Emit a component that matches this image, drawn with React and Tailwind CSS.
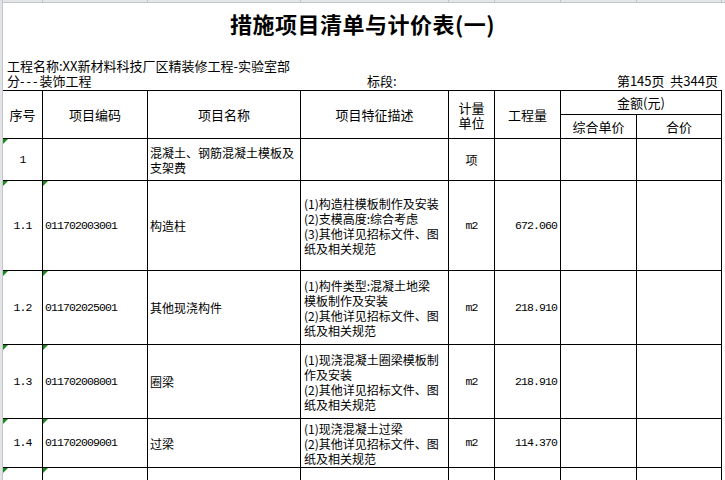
import React from "react";

const COLS = "grid-cols-[40px_105px_153px_148px_46px_66px_76px_85px]";
const CJK = "font-['Noto_Sans_CJK_SC',sans-serif]";
const MONO = "font-['Liberation_Mono','Noto_Sans_CJK_SC',monospace] text-[11.5px] tracking-[-0.9px]";

const DESC_TAIL = ["(2)其他详见招标文件、图", "纸及相关规范"];

const rows = [
  {
    no: "1",
    code: "",
    name: ["混凝土、钢筋混凝土模板及", "支架费"],
    desc: [],
    unit: "项",
    qty: "",
    h: "h-[42px]",
    markCode: false,
  },
  {
    no: "1.1",
    code: "011702003001",
    name: ["构造柱"],
    desc: ["(1)构造柱模板制作及安装", "(2)支模高度:综合考虑", "(3)其他详见招标文件、图", "纸及相关规范"],
    unit: "m2",
    qty: "672.060",
    h: "h-[90px]",
    markCode: true,
  },
  {
    no: "1.2",
    code: "011702025001",
    name: ["其他现浇构件"],
    desc: ["(1)构件类型:混凝土地梁", "模板制作及安装", ...DESC_TAIL],
    unit: "m2",
    qty: "218.910",
    h: "h-[74px]",
    markCode: true,
  },
  {
    no: "1.3",
    code: "011702008001",
    name: ["圈梁"],
    desc: ["(1)现浇混凝土圈梁模板制", "作及安装", ...DESC_TAIL],
    unit: "m2",
    qty: "218.910",
    h: "h-[74px]",
    markCode: true,
  },
  {
    no: "1.4",
    code: "011702009001",
    name: ["过梁"],
    desc: ["(1)现浇混凝土过梁", ...DESC_TAIL],
    unit: "m2",
    qty: "114.370",
    h: "h-[49px]",
    markCode: true,
  },
  {
    no: "",
    code: "",
    name: [],
    desc: [],
    unit: "",
    qty: "",
    h: "h-[60px]",
    markCode: true,
  },
];

// little green "number stored as text" flag in the cell corner
function Flag() {
  return (
    <div className="absolute top-0 left-0 w-0 h-0 border-t-[5px] border-r-[5px] border-t-[#1a8a1a] border-r-transparent" />
  );
}

function Cell({ className = "", children, flag }) {
  return (
    <div className={`relative border-r border-b border-black ${className}`}>
      {flag && <Flag />}
      {children}
    </div>
  );
}

function Lines({ items }) {
  return (
    <div className="leading-[15px]">
      {items.map((t, i) => (
        <div key={i} className="whitespace-nowrap">
          {t}
        </div>
      ))}
    </div>
  );
}

export default function App() {
  const stripCells = [0, 1, 2, 3, 4, 5, 6, 7];

  return (
    <div className={`w-[725px] h-[480px] overflow-hidden bg-white text-black ${CJK}`}>
      {/* sheet column header edge */}
      <div className="flex h-[3px]">
        <div className="w-[3px] bg-[#e1e3e6] border-r border-[#c3c6ca]" />
        <div className={`grid ${COLS} w-[719px]`}>
          {stripCells.map((i) => (
            <div key={i} className="bg-[#e4e6e8] border-r border-b border-[#c3c6ca]" />
          ))}
        </div>
        <div className="flex-1 bg-[#e4e6e8] border-b border-[#c3c6ca]" />
      </div>

      <div className="flex h-[477px] overflow-hidden">
        {/* sheet row header edge */}
        <div className="w-[3px] shrink-0 bg-[#e1e3e6] border-r border-[#c3c6ca]" />

        <div className="w-[719px] shrink-0 flex flex-col">
          <div className="h-[40px] shrink-0 flex items-center justify-center">
            <h1 className="text-[22px] font-bold tracking-[0.5px]">措施项目清单与计价表(一)</h1>
          </div>

          <div className="h-[47px] shrink-0 flex flex-col justify-end pb-[2px] text-[13px] leading-[15px]">
            <div className="pl-[4px] whitespace-nowrap">工程名称:XX新材料科技厂区精装修工程-实验室部</div>
            <div className="flex pl-[4px] pr-[4px]">
              <div className="w-[360px]">
                分<span className="tracking-[2px]">---</span>装饰工程
              </div>
              <div>标段:</div>
              <div className="flex-1" />
              <div>第145页&nbsp;&nbsp;共344页</div>
            </div>
          </div>

          <div className="shrink-0 border-t border-black">
            {/* header */}
            <div className={`grid ${COLS} grid-rows-[24px_24px] text-[13px] leading-[15px]`}>
              <Cell className="row-span-2 flex items-center justify-center">序号</Cell>
              <Cell className="row-span-2 flex items-center justify-center">项目编码</Cell>
              <Cell className="row-span-2 flex items-center justify-center">项目名称</Cell>
              <Cell className="row-span-2 flex items-center justify-center">项目特征描述</Cell>
              <Cell className="row-span-2 flex flex-col items-center justify-center">
                <div>计量</div>
                <div>单位</div>
              </Cell>
              <Cell className="row-span-2 flex items-center justify-center">工程量</Cell>
              <Cell className="col-span-2 flex items-center justify-center">金额(元)</Cell>
              <Cell className="flex items-center justify-center">综合单价</Cell>
              <Cell className="flex items-center justify-center">合价</Cell>
            </div>

            {/* body */}
            {rows.map((r, i) => (
              <div key={i} className={`grid ${COLS} text-[12px]`}>
                <Cell className={`${r.h} flex items-center justify-center`} flag>
                  <span className={MONO}>{r.no}</span>
                </Cell>
                <Cell className={`${r.h} flex items-center pl-[2px]`} flag={r.markCode}>
                  <span className={MONO}>{r.code}</span>
                </Cell>
                <Cell className={`${r.h} flex items-center pl-[2px]`}>
                  <Lines items={r.name} />
                </Cell>
                <Cell className={`${r.h} flex items-center pl-[3px]`}>
                  <Lines items={r.desc} />
                </Cell>
                <Cell className={`${r.h} flex items-center justify-center`}>
                  <span className={r.unit === "m2" ? MONO : ""}>{r.unit}</span>
                </Cell>
                <Cell className={`${r.h} flex items-center justify-end pr-[3px]`}>
                  <span className={MONO}>{r.qty}</span>
                </Cell>
                <Cell className={r.h} />
                <Cell className={r.h} />
              </div>
            ))}
          </div>
        </div>
      </div>
    </div>
  );
}
